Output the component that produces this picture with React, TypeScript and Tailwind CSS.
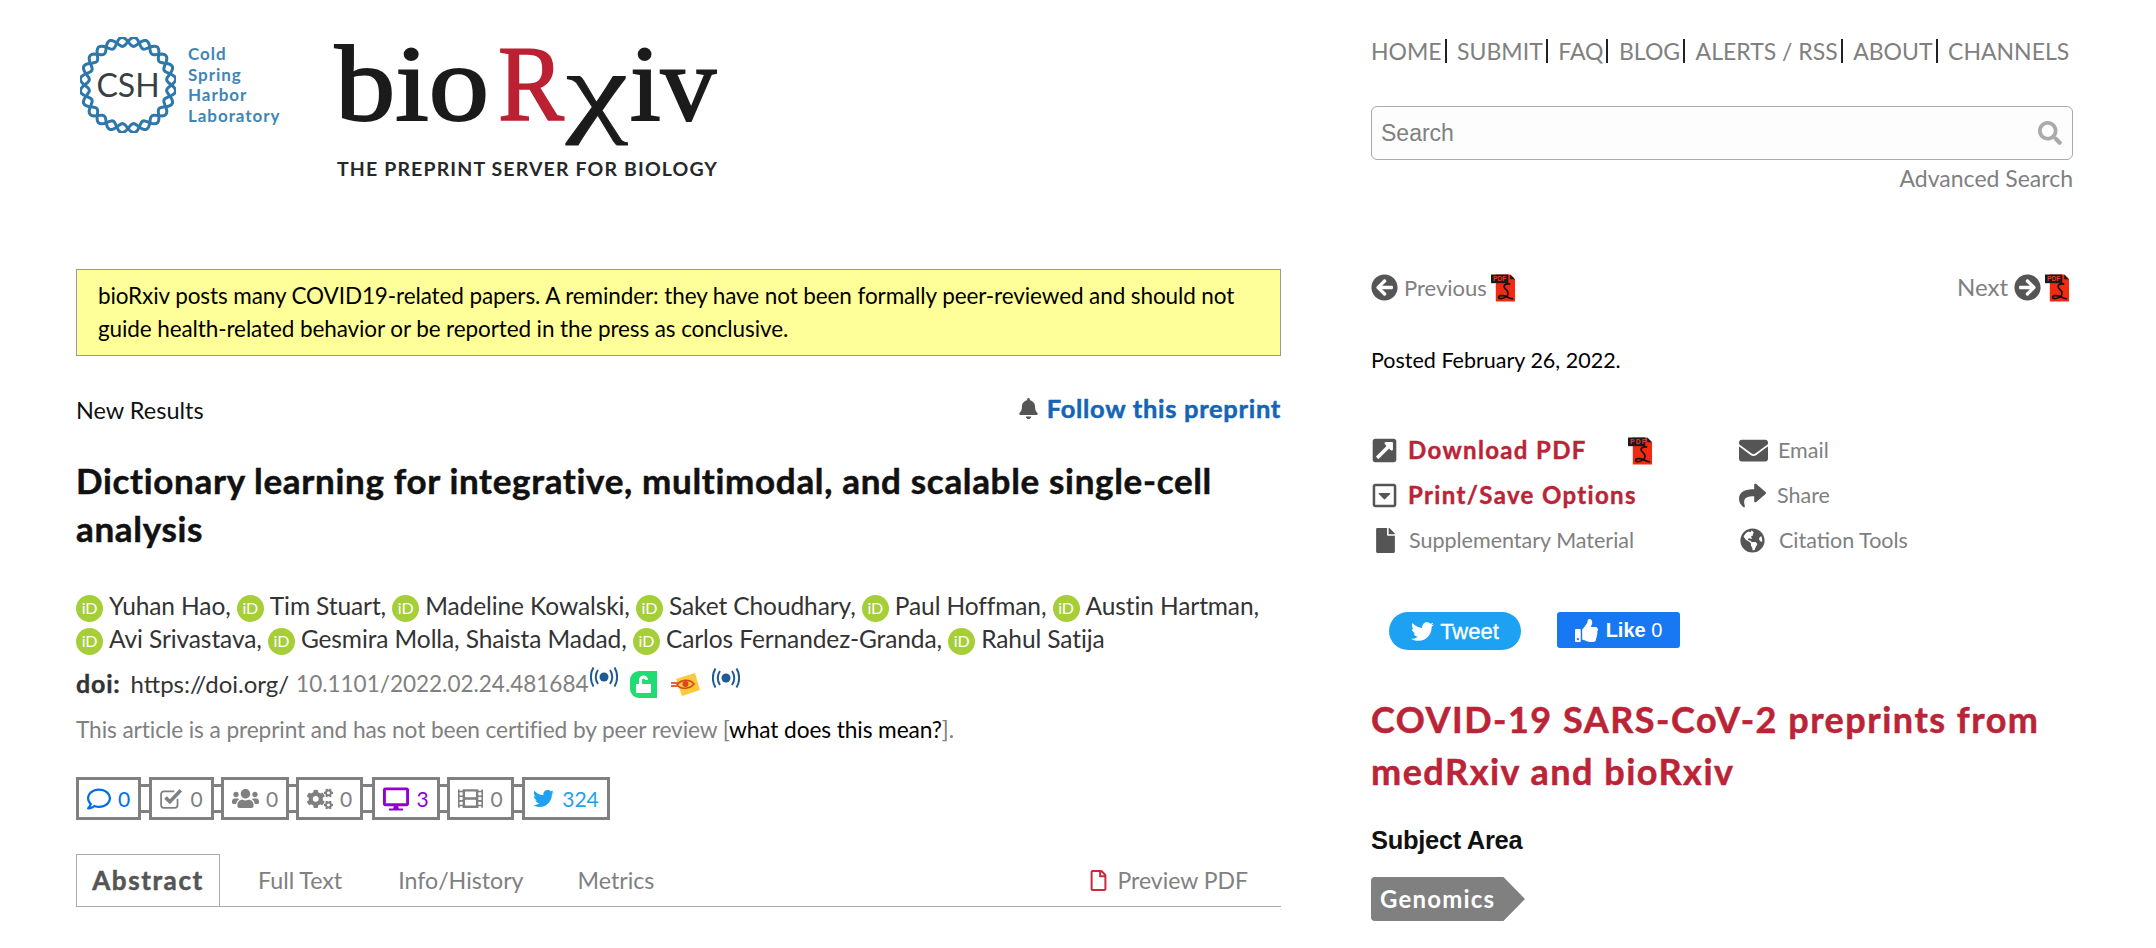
import React from 'react';
import { FaArrowCircleLeft, FaArrowCircleRight, FaBell, FaExternalLinkSquareAlt, FaRegCaretSquareDown, FaFile, FaEnvelope, FaShare, FaGlobeAmericas, FaSearch, FaRegComment, FaUsers, FaCogs, FaDesktop, FaFilm, FaTwitter, FaThumbsUp, FaRegFile } from 'react-icons/fa';

function ringPath(sign: number) {
  const pts: string[] = [];
  for (let i = 0; i <= 360; i += 2) {
    const t = (i * Math.PI) / 180;
    const r = 43.5 + sign * 4.5 * Math.sin(12 * t);
    pts.push(`${i === 0 ? 'M' : 'L'}${(48 + r * Math.cos(t)).toFixed(2)} ${(48 + r * Math.sin(t)).toFixed(2)}`);
  }
  return pts.join(' ') + 'Z';
}

function CshLogo() {
  return (
    <div className="flex items-start">
      <svg width="96" height="96" viewBox="0 0 96 96" className="block">
        <path d={ringPath(1)} fill="none" stroke="#2d77ab" strokeWidth="3" />
        <path d={ringPath(-1)} fill="none" stroke="#2d77ab" strokeWidth="3" />
        <text x="48" y="60" textAnchor="middle" fontFamily="Lato, sans-serif" fontSize="32" fill="#3a3f42">CSH</text>
      </svg>
      <div className="ml-[12px] mt-[7px] text-[17px] leading-[20.7px] font-bold tracking-[0.95px] text-[#3f86b5] font-['Lato',sans-serif]">
        <div>Cold</div><div>Spring</div><div>Harbor</div><div>Laboratory</div>
      </div>
    </div>
  );
}

function BiorxivLogo() {
  return (
    <svg width="392" height="150" viewBox="0 0 392 150" className="block ml-[48px] -mt-[2px]">
      <g fontFamily="'Liberation Serif', serif" fontSize="108">
        <text x="3" y="85" textLength="154" lengthAdjust="spacingAndGlyphs" fill="#1b1b1b" stroke="#1b1b1b" strokeWidth="2">bio</text>
        <text x="166" y="85" textLength="66" lengthAdjust="spacingAndGlyphs" fill="#bb2033" stroke="#bb2033" strokeWidth="1.6">R</text>
        <text x="234" y="88" textLength="62" lengthAdjust="spacingAndGlyphs" fontSize="102" fill="#1b1b1b" stroke="#1b1b1b" strokeWidth="0.8">χ</text>
        <text x="298" y="85" textLength="86" lengthAdjust="spacingAndGlyphs" fill="#1b1b1b" stroke="#1b1b1b" strokeWidth="2">iv</text>
      </g>
      <text x="5" y="141" textLength="380" lengthAdjust="spacing" fontFamily="Lato, sans-serif" fontWeight="700" fontSize="19.5" fill="#26282a">THE PREPRINT SERVER FOR BIOLOGY</text>
    </svg>
  );
}

function Orcid() {
  return (
    <span className="inline-flex items-center justify-center w-[27px] h-[27px] rounded-full bg-[#a6ce39] text-white text-[16px] font-normal leading-none align-[1px] mr-[6px] font-['Lato',sans-serif]">iD</span>
  );
}

function PdfSnake() {
  return (
    <svg width="25" height="29" viewBox="0 0 26 29" className="block shrink-0">
      <path d="M5 1H20L25 6V29H5Z" fill="#f22a12" />
      <path d="M0 1H18V10H0Z" fill="#1a1a1a" />
      <path d="M20 1L25 6H20Z" fill="#1a1a1a" />
      <text x="2" y="8" fontSize="7" fill="#e8392a" fontFamily="'Liberation Sans', sans-serif" fontWeight="700">PDF</text>
      <path d="M20 11C14 10 12 13 15 16C18 19 19 21 16 24C13 26 9 27 8 25C7 23 12 22 16 24C19 25 21 27 23 26" fill="none" stroke="#111" strokeWidth="1.7" />
    </svg>
  );
}

function Broadcast({ className = '' }: { className?: string }) {
  return (
    <svg width="28" height="22" viewBox="0 0 28 22" className={className}>
      <circle cx="14" cy="10" r="4.5" fill="#1f5a94" />
      <g fill="none" stroke="#1f5a94" strokeWidth="2">
        <path d="M8 3C5 7 5 13 8 17" />
        <path d="M20 3C23 7 23 13 20 17" />
        <path d="M3.5 0.5C0 6 0 14 3.5 19.5" />
        <path d="M24.5 0.5C28 6 28 14 24.5 19.5" />
      </g>
    </svg>
  );
}

function CheckBox() {
  return (
    <svg width="23" height="23" viewBox="0 0 21 21">
      <path d="M16 11V16.500A2.500 2.500 0 0 1 13.500 19H3.500A2.500 2.500 0 0 1 1 16.500V6.500A2.500 2.500 0 0 1 3.500 4H13" fill="none" stroke="#808080" strokeWidth="1.600" />
      <path d="M5 9.500L9 13.500L19 3" fill="none" stroke="#808080" strokeWidth="3.200" />
    </svg>
  );
}

const badges = [
  { w: 'w-[65px]', gapBefore: 'w-0', icon: <FaRegComment className="text-[#006ee6] text-[24px]" />, n: '0', c: 'text-[#006ee6]', gap: 'gap-[7px]' },
  { w: 'w-[65px]', gapBefore: 'w-[8px]', icon: <CheckBox />, n: '0', c: 'text-[#808080]', gap: 'gap-[7px]' },
  { w: 'w-[68px]', gapBefore: 'w-[7px]', icon: <FaUsers className="text-[#808080] text-[27px]" />, n: '0', c: 'text-[#808080]', gap: 'gap-[7px]' },
  { w: 'w-[67px]', gapBefore: 'w-[7px]', icon: <FaCogs className="text-[#808080] text-[26px]" />, n: '0', c: 'text-[#808080]', gap: 'gap-[7px]' },
  { w: 'w-[68px]', gapBefore: 'w-[9px]', icon: <FaDesktop className="text-[#9400d3] text-[26px]" />, n: '3', c: 'text-[#9400d3]', gap: 'gap-[7px]' },
  { w: 'w-[67px]', gapBefore: 'w-[7px]', icon: <FaFilm className="text-[#808080] text-[25px]" />, n: '0', c: 'text-[#808080]', gap: 'gap-[7px]' },
  { w: 'w-[88px]', gapBefore: 'w-[8px]', icon: <FaTwitter className="text-[#1da1f2] text-[21px]" />, n: '324', c: 'text-[#1da1f2]', gap: 'gap-[8px]' },
];

const nav = ['HOME', 'SUBMIT', 'FAQ', 'BLOG', 'ALERTS / RSS', 'ABOUT', 'CHANNELS'];

export default function App() {
  return (
    <div className="flex h-[948px] w-full overflow-hidden bg-white text-[#222] font-['Lato',sans-serif]">
      <main className="ml-[76px] w-[1205px] shrink-0">
        <header className="flex h-[269px] items-start pt-[37px]">
          <div className="w-[204px] shrink-0 ml-[4px]"><CshLogo /></div>
          <BiorxivLogo />
        </header>

        <div className="h-[87px] border border-[#999] bg-[#ffff99] px-[21px] pt-[9px] text-[22.5px] leading-[33px] tracking-[-0.1px] text-black">
          bioRxiv posts many COVID19-related papers. A reminder: they have not been formally peer-reviewed and should not guide health-related behavior or be reported in the press as conclusive.
        </div>

        <div className="mt-[38px] flex items-start justify-between h-[32px]">
          <span className="text-[23.5px] leading-[32px] text-[#111]">New Results</span>
          <span className="flex items-center gap-[8px] h-[28px] text-[25.5px] font-bold tracking-[0.7px] text-[#1465b5] [-webkit-text-stroke:0.5px]">
            <FaBell className="text-[#555] text-[21px]" />Follow this preprint
          </span>
        </div>

        <h1 className="mt-[30px] text-[35px] leading-[48px] font-bold text-[#111] tracking-[0.67px] [-webkit-text-stroke:0.5px]">
          Dictionary learning for integrative, multimodal, and scalable single-cell analysis
        </h1>

        <div className="mt-[37px] text-[24.5px] leading-[33px] text-[#333] tracking-[-0.1px]">
          <div><Orcid />Yuhan Hao, <Orcid />Tim Stuart, <Orcid />Madeline Kowalski, <Orcid />Saket Choudhary, <Orcid />Paul Hoffman, <Orcid />Austin Hartman,</div>
          <div><Orcid />Avi Srivastava, <Orcid />Gesmira Molla, Shaista Madad, <Orcid />Carlos Fernandez-Granda, <Orcid />Rahul Satija</div>
        </div>

        <div className="mt-[13px] flex items-center h-[32px] text-[24px] text-[#333]">
          <span className="font-bold text-[25px] tracking-[0.8px] [-webkit-text-stroke:0.4px] mr-[10px]">doi:</span>
          <span>https://doi.org/</span>
          <span className="ml-[7px] text-[22.5px] text-[#808080]">10.1101/2022.02.24.481684</span>
          <Broadcast className="-mt-[12px] ml-[1px]" />
          <svg width="28" height="28" viewBox="0 0 28 28" className="ml-[11px]">
            <path d="M10 1H28V28H10A9 9 0 0 1 1 19V10A9 9 0 0 1 10 1Z" fill="#1fdd73" />
            <path d="M7 14H22V23H7ZM10 14V10A4.500 4.500 0 0 1 19 10H16A1.500 1.500 0 0 0 13 10V14Z" fill="#fff" />
          </svg>
          <svg width="32" height="28" viewBox="0 0 32 28" className="ml-[13px]">
            <path d="M6 9L25 3L30 20L12 26Z" fill="#fcc93a" />
            <path d="M7 15C11 9 20 9 24 14C20 19 11 20 7 15Z" fill="none" stroke="#d9471e" strokeWidth="1.600" />
            <circle cx="15.500" cy="14" r="3" fill="#d9471e" />
            <path d="M1 13H8M1 16H8" stroke="#e2613e" strokeWidth="2" />
          </svg>
          <Broadcast className="-mt-[10px] ml-[10px]" />
        </div>

        <p className="mt-[14px] h-[32px] text-[22.7px] leading-[32px] text-[#808080] tracking-[-0.1px]">
          This article is a preprint and has not been certified by peer review [<span className="text-black">what does this mean?</span>].
        </p>

        <div className="mt-[31px] flex items-center">
          {badges.map((b, i) => (
            <React.Fragment key={i}>
              {i > 0 && <div className={`h-[29px] border-y-[3px] border-[#808080] ${b.gapBefore}`} />}
              <div className={`flex h-[43px] items-center justify-center border-[3px] border-[#808080] text-[21px] ${b.w} ${b.gap} ${b.c}`}>
                {b.icon}<span>{b.n}</span>
              </div>
            </React.Fragment>
          ))}
        </div>

        <nav className="mt-[34px] flex h-[53px] items-stretch border-b border-[#aaa] text-[23.2px] text-[#808080]">
          <div className="-mb-px flex w-[144px] items-center justify-center border border-[#aaa] bg-white text-[26px] font-bold tracking-[1.6px] text-[#555] [-webkit-text-stroke:0.5px]">Abstract</div>
          <div className="ml-[38px] flex items-center">Full Text</div>
          <div className="ml-[56px] flex items-center">Info/History</div>
          <div className="ml-[54px] flex items-center">Metrics</div>
          <div className="ml-auto mr-[33px] flex items-center gap-[8px] text-[23px]">
            <FaRegFile className="text-[#c42b3b] text-[21px]" />Preview PDF
          </div>
        </nav>
      </main>

      <aside className="ml-[90px] w-[702px] shrink-0">
        <div className="mt-[37px] flex h-[28px] items-center text-[23px] leading-none text-[#808080]">
          {nav.map((n, i) => (
            <React.Fragment key={n}>
              {i > 0 && <span className="ml-[3px] mr-[10.5px] h-[24px] w-[2px] bg-[#222]" />}
              <span>{n}</span>
            </React.Fragment>
          ))}
        </div>

        <div className="mt-[41px] flex h-[54px] items-center justify-between rounded-[6px] border border-[#aaa] bg-[#fdfdfd] pl-[9px] pr-[10px]">
          <span className="text-[23px] text-[#808080] font-['Liberation_Sans',sans-serif]">Search</span>
          <FaSearch className="text-[#aaa] text-[24px]" />
        </div>
        <div className="mt-[4px] text-right text-[23px] leading-[28px] text-[#808080]">Advanced Search</div>

        <div className="mt-[80px] mr-[3px] flex h-[30px] items-center text-[22px] text-[#808080]">
          <FaArrowCircleLeft className="text-[#555] text-[27px]" />
          <span className="ml-[6px]">Previous</span>
          <span className="ml-[4px]"><PdfSnake /></span>
          <span className="ml-auto text-[24px]">Next</span>
          <FaArrowCircleRight className="ml-[6px] text-[#555] text-[27px]" />
          <span className="ml-[4px]"><PdfSnake /></span>
        </div>

        <div className="mt-[43px] text-[21.5px] leading-[30px] text-black">Posted February 26, 2022.</div>

        <div className="mt-[60px] grid grid-cols-[368px_1fr] gap-y-[15px] text-[21.5px] leading-[30px]">
          <div className="flex items-center text-[24px] font-bold text-[#bb2436] tracking-[1.35px] [-webkit-text-stroke:0.4px]">
            <FaExternalLinkSquareAlt className="text-[#555] text-[27px] mr-[10px]" />Download PDF<span className="ml-[41px]"><PdfSnake /></span>
          </div>
          <div className="flex items-center text-[#808080]"><FaEnvelope className="text-[#555] text-[29px] mr-[10px]" />Email</div>
          <div className="flex items-center text-[24px] font-bold text-[#bb2436] tracking-[1.35px] [-webkit-text-stroke:0.4px]">
            <FaRegCaretSquareDown className="text-[#555] text-[27px] mr-[10px]" />Print/Save Options
          </div>
          <div className="flex items-center text-[#808080]"><FaShare className="text-[#555] text-[27px] mr-[11px]" />Share</div>
          <div className="flex items-center text-[#808080]">
            <FaFile className="text-[#555] text-[25px] mr-[11px] ml-[2px]" />Supplementary Material
          </div>
          <div className="flex items-center text-[#808080]"><FaGlobeAmericas className="text-[#555] text-[25px] mr-[14px] ml-[1px]" />Citation Tools</div>
        </div>

        <div className="mt-[57px] flex items-center pl-[18px]">
          <div className="flex h-[38px] w-[132px] items-center justify-center gap-[6px] rounded-[19px] bg-[#1da1f2] text-[22px] font-medium text-white font-['Liberation_Sans',sans-serif] [-webkit-text-stroke:0.3px]">
            <FaTwitter className="text-[23px]" />Tweet
          </div>
          <div className="ml-[36px] -mt-[2px] flex h-[36px] w-[123px] items-center justify-center gap-[8px] rounded-[3px] bg-[#1877f2] text-[20px] font-bold text-white font-['Liberation_Sans',sans-serif]">
            <FaThumbsUp className="text-[23px]" /><span>Like <span className="font-normal">0</span></span>
          </div>
        </div>

        <h2 className="mt-[43px] text-[36px] leading-[52px] font-bold text-[#bb2436] tracking-[1.5px] [-webkit-text-stroke:0.5px]">
          COVID-19 SARS-CoV-2 preprints from medRxiv and bioRxiv
        </h2>

        <div className="mt-[27px] text-[25.5px] leading-[32px] font-bold text-[#111] font-['Liberation_Sans',sans-serif] tracking-[-0.3px]">Subject Area</div>

        <div className="mt-[21px] flex h-[44px] w-[154px] items-center rounded-l-[4px] bg-[#808080] pl-[9px] text-[24px] font-bold tracking-[1.2px] text-white [clip-path:polygon(0_0,86%_0,100%_50%,86%_100%,0_100%)]">Genomics</div>
      </aside>
    </div>
  );
}
